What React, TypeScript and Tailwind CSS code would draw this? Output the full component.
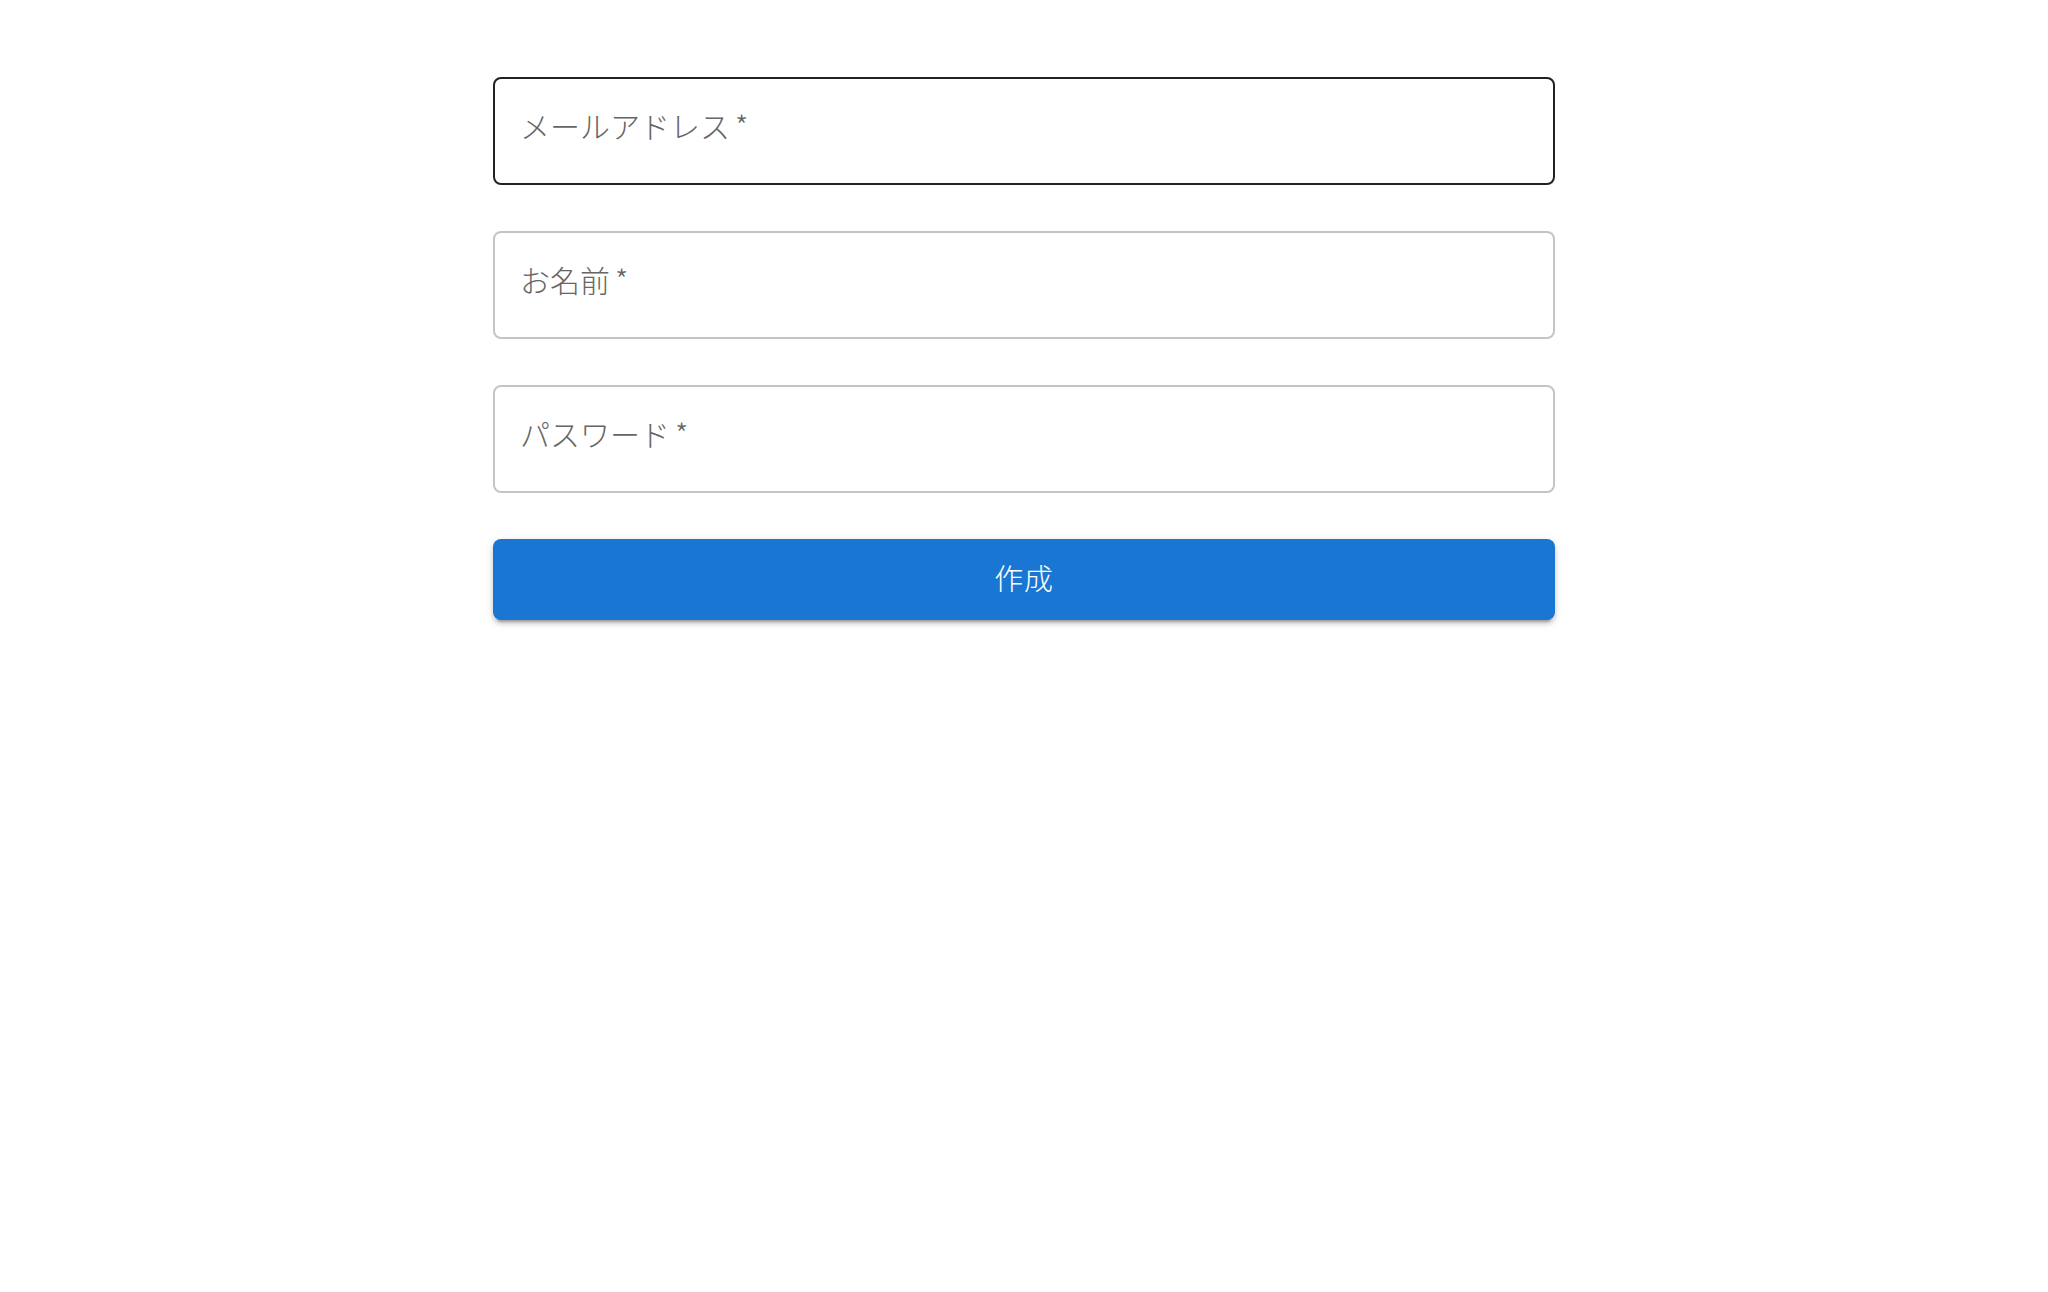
import React from "react";

const font = { fontFamily: '"Noto Sans CJK JP", "Noto Sans", Roboto, sans-serif' };

function Field({ label, focused }: { label: string; focused?: boolean }) {
  return (
    <label
      className={
        "flex h-[108px] w-full cursor-text items-start rounded-[8px] border-2 bg-white pl-[25px] pt-[24px] " +
        (focused ? "border-[#222222]" : "border-[#c4c4c4]")
      }
    >
      <span className="text-[30px] font-light leading-[44px] text-[#666666]">
        {label}
        <span className="ml-[5px]">*</span>
      </span>
    </label>
  );
}

export default function App() {
  return (
    <div className="min-h-screen w-full bg-white" style={font}>
      <div className="mx-auto flex w-[1062px] flex-col gap-[46px] pt-[77px]">
        <Field label="メールアドレス" focused />
        <Field label="お名前" />
        <Field label="パスワード" />
        <button
          type="button"
          className="flex h-[81px] w-full items-center justify-center rounded-[8px] bg-[#1976d2] pb-[4px] text-[29px] font-light tracking-[0.8px] text-white shadow-[0_6px_2px_-4px_rgba(0,0,0,0.2),0_4px_4px_0_rgba(0,0,0,0.14),0_2px_10px_0_rgba(0,0,0,0.12)]"
        >
          作成
        </button>
      </div>
    </div>
  );
}
